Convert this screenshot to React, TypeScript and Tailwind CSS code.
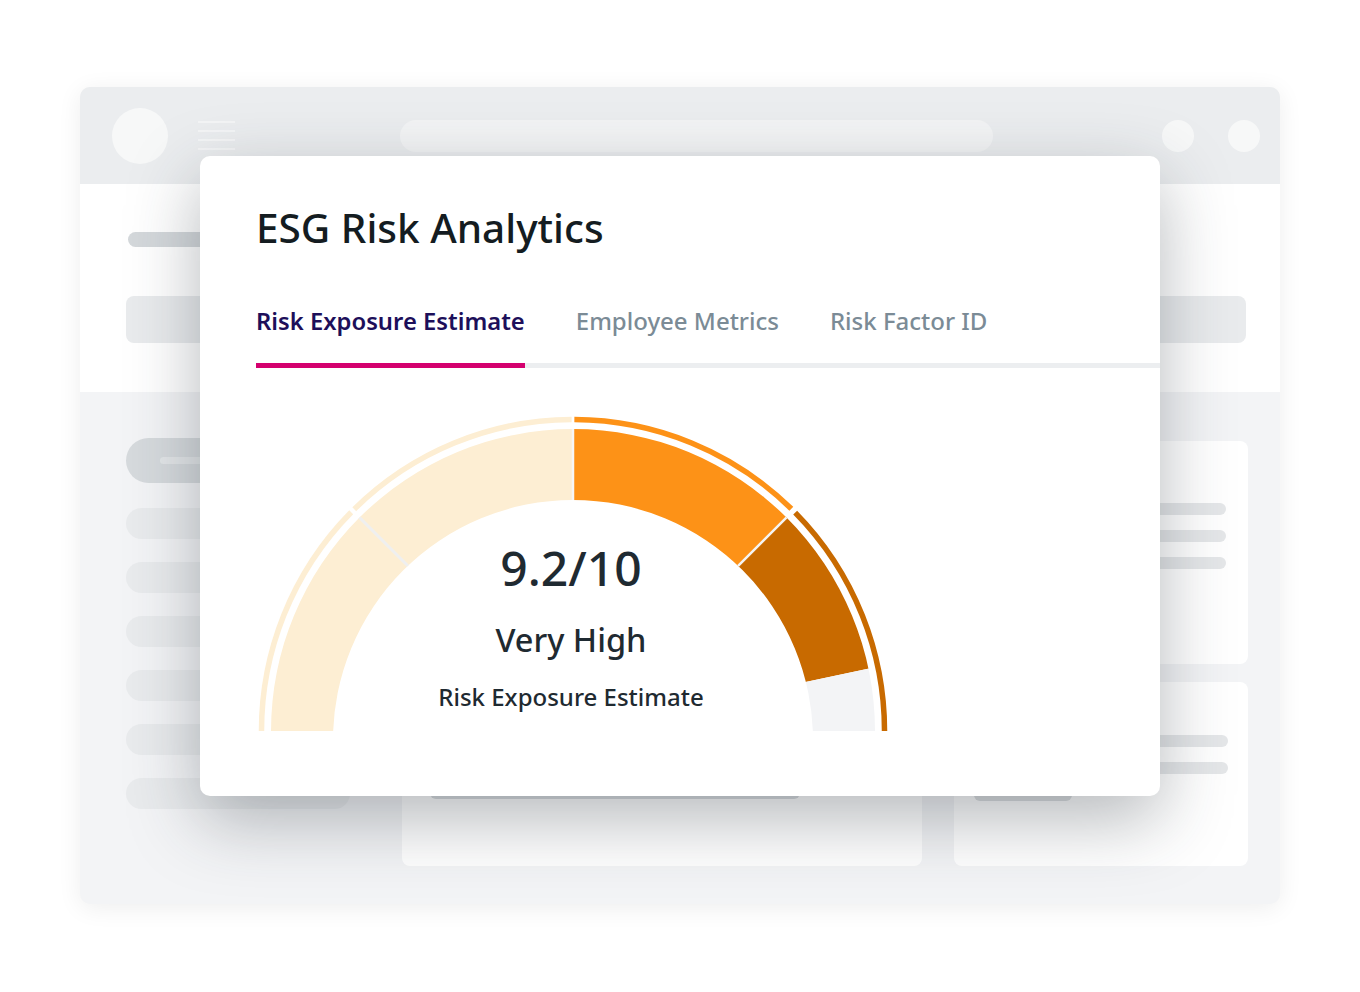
import React from 'react';

const CX = 317;
const CY = 322;
const R_OUT = 302;
const IN_CY = 331;
const R_IN = 240;
const R_THIN = 311.5;

function pt(r: number, deg: number, cy = CY) {
    const a = (deg * Math.PI) / 180;
    return [CX + r * Math.cos(a), cy - r * Math.sin(a)];
}

// pie wedge from the gauge centre, later clipped to the band
function wedge(a0: number, a1: number) {
    const [x0, y0] = pt(420, a0);
    const [x1, y1] = pt(420, a1);
    return `M${CX} ${CY} L${x0} ${y0} A420 420 0 0 1 ${x1} ${y1} Z`;
}

function arc(r: number, a0: number, a1: number) {
    const [x0, y0] = pt(r, a0);
    const [x1, y1] = pt(r, a1);
    return `M${x0} ${y0} A${r} ${r} 0 0 1 ${x1} ${y1}`;
}

function Gauge() {
    const band =
        `M${CX - R_OUT} ${CY} A${R_OUT} ${R_OUT} 0 0 1 ${CX + R_OUT} ${CY} ` +
        `A${R_OUT} ${R_OUT} 0 0 1 ${CX - R_OUT} ${CY} Z ` +
        `M${CX - R_IN} ${IN_CY} A${R_IN} ${R_IN} 0 0 1 ${CX + R_IN} ${IN_CY} ` +
        `A${R_IN} ${R_IN} 0 0 1 ${CX - R_IN} ${IN_CY} Z`;

    const divider = (deg: number, color: string, w: number) => {
        const [x, y] = pt(330, deg);
        return <line x1={CX} y1={CY} x2={x} y2={y} stroke={color} strokeWidth={w} />;
    };

    return (
        <svg width="640" height="324" viewBox="0 0 640 324" className="block">
            <defs>
                <clipPath id="band">
                    <path d={band} clipRule="evenodd" />
                </clipPath>
                <clipPath id="half">
                    <rect x="0" y="0" width="640" height={CY} />
                </clipPath>
            </defs>
            <g clipPath="url(#half)">
                <g clipPath="url(#band)">
                    <path d={wedge(180, 90)} fill="#fdeed3" />
                    <path d={wedge(90, 45)} fill="#fd9217" />
                    <path d={wedge(45, 11.9)} fill="#c86a00" />
                    <path d={wedge(11.9, 0)} fill="#f3f4f6" />
                    <path d={wedge(0, -10)} fill="#f3f4f6" />
                    {divider(135, '#efefef', 3)}
                    {divider(90, '#f7f7f7', 2.5)}
                    {divider(45, '#f5f5f5', 2.5)}
                </g>
                <g fill="none" strokeWidth="5.5">
                    <path d={arc(R_THIN, 181, 135.4)} stroke="#fdeed3" />
                    <path d={arc(R_THIN, 134.6, 90.25)} stroke="#fdeed3" />
                    <path d={arc(R_THIN, 89.75, 45.5)} stroke="#fd9217" />
                    <path d={arc(R_THIN, 44.5, -1)} stroke="#c86a00" />
                </g>
            </g>
        </svg>
    );
}

function Header() {
    return (
        <div className="flex h-[97px] items-center bg-[#ebedef] pl-[32px] pr-[20px]">
            <div className="h-[56px] w-[56px] rounded-full bg-[#f7f8f8]" />
            <div className="ml-[30px] flex w-[37px] flex-col gap-[6.5px]">
                <div className="h-[2.5px] bg-[#f4f5f6]" />
                <div className="h-[2.5px] bg-[#f4f5f6]" />
                <div className="h-[2.5px] bg-[#f4f5f6]" />
                <div className="h-[2.5px] bg-[#f4f5f6]" />
            </div>
            <div className="ml-[165px] h-[32px] w-[593px] rounded-full bg-[#f3f4f5]" />
            <div className="ml-auto flex gap-[34px]">
                <div className="h-[32px] w-[32px] rounded-full bg-[#f7f8f8]" />
                <div className="h-[32px] w-[32px] rounded-full bg-[#f7f8f8]" />
            </div>
        </div>
    );
}

function Backdrop() {
    return (
        <div className="h-[817px] w-[1200px] overflow-hidden rounded-[10px] bg-[#f3f4f6] shadow-[0_4px_24px_rgba(0,0,0,0.07)]">
            <Header />
            <div className="h-[208px] bg-white pl-[46px] pr-[34px] pt-[48px]">
                <div className="ml-[2px] h-[15px] w-[200px] rounded-full bg-[#d4d8db]" />
                <div className="mt-[49px] h-[47px] rounded-lg bg-[#e9ebed]" />
            </div>
            <div className="flex pl-[46px] pt-[46px]">
                <div className="flex w-[224px] flex-col gap-[23px]">
                    <div className="mb-[2px] flex h-[45px] items-center rounded-full bg-[#d6dadd] pl-[34px]">
                        <div className="h-[7px] w-[120px] rounded-full bg-[#e3e6e8]" />
                    </div>
                    {[0, 1, 2, 3, 4, 5].map((i) => (
                        <div key={i} className="h-[31px] rounded-full bg-[#e9ebed]" />
                    ))}
                </div>
                <div className="ml-[52px] mt-[3px] h-[425px] w-[520px] rounded-lg bg-white px-[28px] pt-[346px]">
                    <div className="h-[12px] w-[370px] rounded-full bg-[#d9dcdf]" />
                </div>
                <div className="ml-[32px] mt-[3px] flex w-[294px] flex-col gap-[18px]">
                    <div className="flex h-[223px] flex-col gap-[15px] rounded-lg bg-white px-[22px] pt-[62px]">
                        <div className="h-[12px] rounded-full bg-[#e5e7e9]" />
                        <div className="h-[12px] rounded-full bg-[#e5e7e9]" />
                        <div className="h-[12px] rounded-full bg-[#e5e7e9]" />
                    </div>
                    <div className="flex h-[184px] flex-col gap-[15px] rounded-lg bg-white px-[20px] pt-[53px]">
                        <div className="ml-[2px] h-[12px] rounded-full bg-[#e5e7e9]" />
                        <div className="ml-[2px] h-[12px] rounded-full bg-[#e5e7e9]" />
                        <div className="h-[12px] w-[98px] rounded-full bg-[#dcdfe1]" />
                    </div>
                </div>
            </div>
        </div>
    );
}

function Modal() {
    const tabs = ['Risk Exposure Estimate', 'Employee Metrics', 'Risk Factor ID'];
    return (
        <div className="absolute left-[120px] top-[69px] h-[640px] w-[960px] rounded-[10px] bg-white pt-[46px] shadow-[0_24px_70px_rgba(40,50,60,0.34)]">
            <h1 className="pl-[56px] text-[40.5px] font-medium leading-[52px] text-[#141c21]">ESG Risk Analytics</h1>
            <div className="ml-[56px] mt-[51px] flex gap-[51px] border-b-[5px] border-[#eceef0]">
                {tabs.map((t, i) => (
                    <div
                        key={t}
                        className={
                            i === 0
                                ? '-mb-[5px] border-b-[5px] border-[#d4006e] pb-[26px] text-[23.8px] font-semibold leading-[32px] text-[#1d0f5a]'
                                : '-mb-[5px] border-b-[5px] border-transparent pb-[26px] text-[24px] font-medium leading-[32px] text-[#7b8b96]'
                        }
                    >
                        {t}
                    </div>
                ))}
            </div>
            <div className="relative ml-[56px] mt-[41px] w-[640px]">
                <Gauge />
                <div className="absolute left-[-5px] right-[5px] top-[135px] flex flex-col items-center text-[#1f2a31]">
                    <div className="text-[48px] font-medium leading-[48px]">9.2/10</div>
                    <div className="mt-[31px] text-[32.5px] font-medium leading-[33px]">Very High</div>
                    <div className="mt-[29px] text-[24px] font-medium leading-[24px]">Risk Exposure Estimate</div>
                </div>
            </div>
        </div>
    );
}

export default function App() {
    return (
        <div className="h-[992px] w-[1360px] bg-white pl-[80px] pt-[87px] font-['Noto_Sans','Open_Sans',sans-serif]">
            <div className="relative w-[1200px]">
                <Backdrop />
                <Modal />
            </div>
        </div>
    );
}
